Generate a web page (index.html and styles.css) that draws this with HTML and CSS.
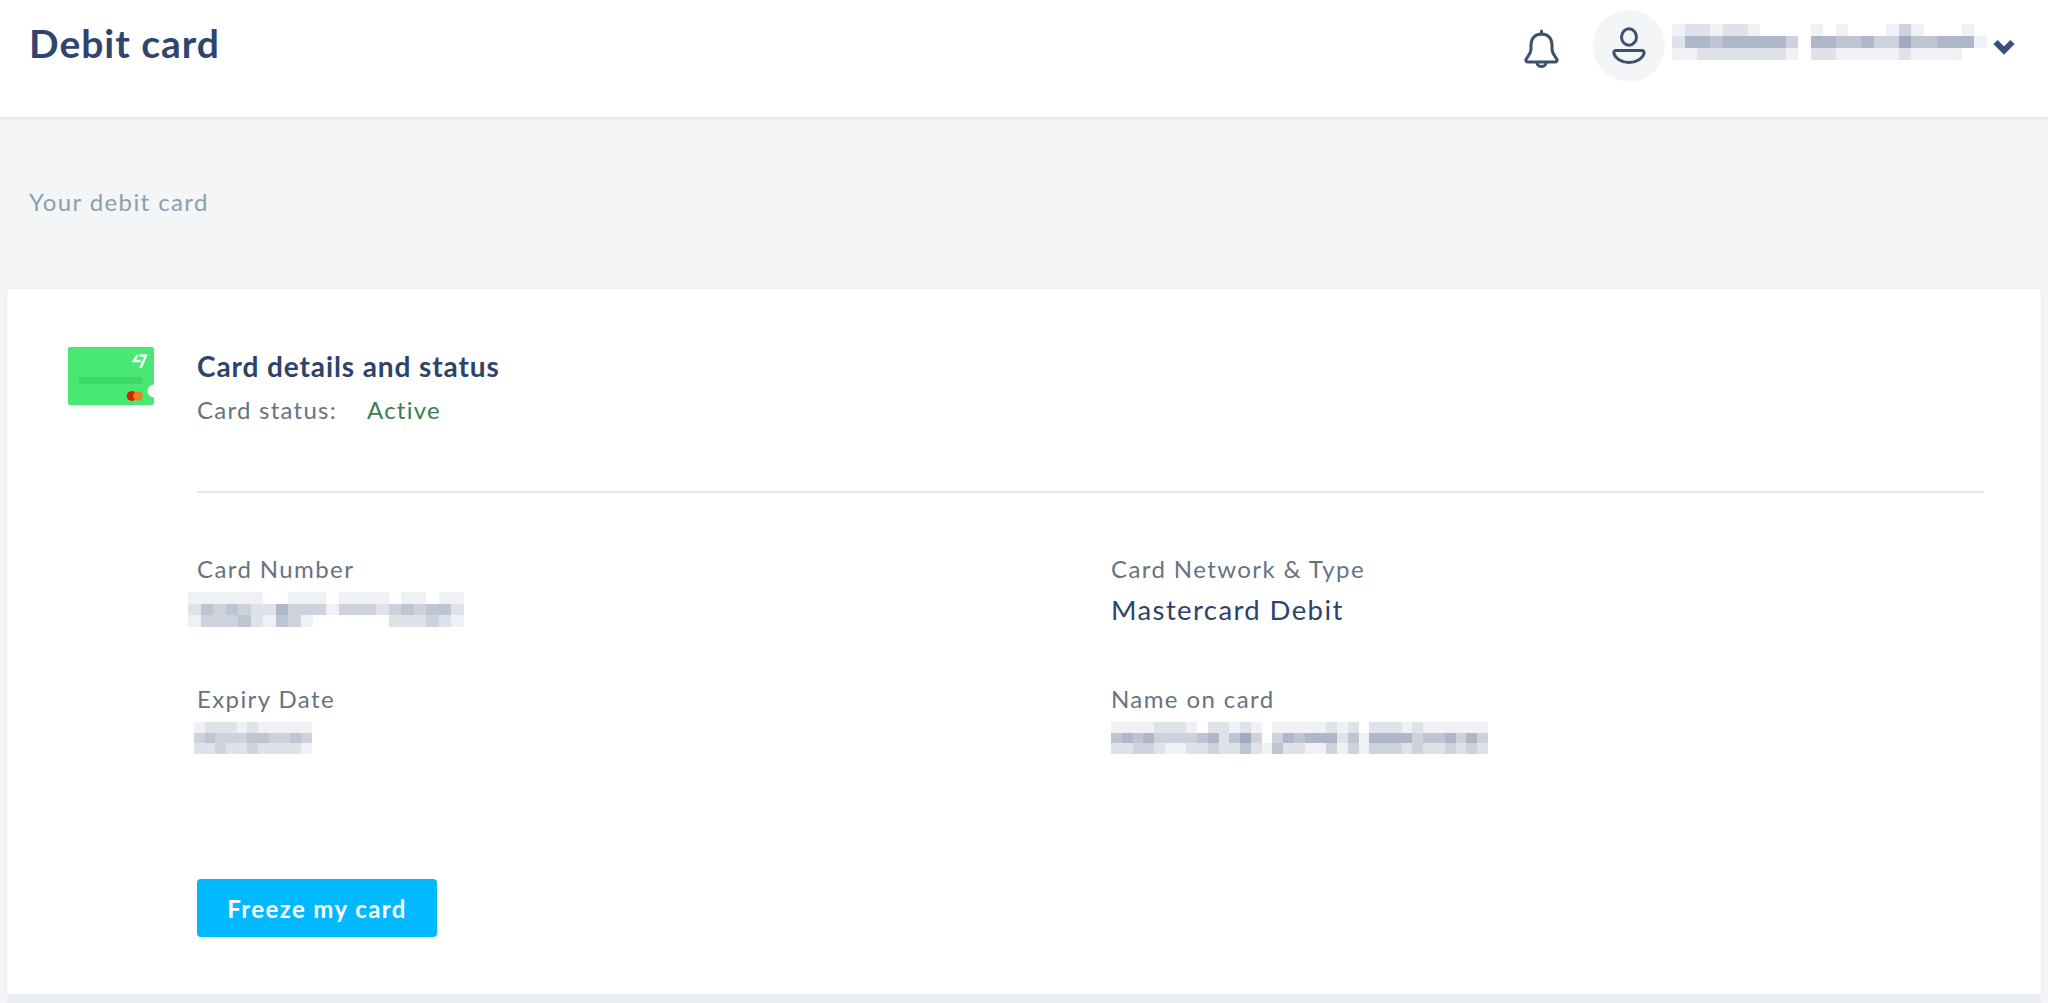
FILE: index.html
```html
<!DOCTYPE html>
<html lang="en">
<head>
<meta charset="utf-8">
<title>Debit card</title>
<link rel="stylesheet" href="styles.css">
</head>
<body>
<header class="topbar">
  <h1 class="page-title">Debit card</h1>
  <div class="account">
    <svg class="bell" viewBox="0 0 37 39" aria-hidden="true"><path d="M18.5 5C11.5 5 8 10 8 16v4c0 5-4 8-5 10.500C2.500 32 3.500 33 5 33h27c1.500 0 2.500-1 2-2.500C33 28 29 25 29 20v-4C29 10 25.500 5 18.500 5z"/><path d="M18.500 2v3M14 33.500a4.500 4 0 0 0 9 0"/></svg>
    <div class="avatar"><svg class="person" viewBox="0 0 34 37" aria-hidden="true"><ellipse cx="17" cy="10" rx="7.500" ry="8.300"/><path d="M4 23.500h26c1.500 0 2.500 1.200 2 3C31 31 24.500 35.500 17 35.500S3 31 2 26.500c-.5-1.800.5-3 2-3z"/></svg></div>
    <div class="mosaic mosaic-user">
      <i class="m1"></i><i class="m2"></i><i class="m2"></i><i class="m1"></i><i class="m2"></i><i class="m2"></i><i class="m1"></i><i></i><i></i><i></i><i></i><i class="m1"></i><i></i><i class="m1"></i><i></i><i></i><i></i><i class="m1"></i><i class="m3"></i><i class="m1"></i><i></i><i></i><i></i><i class="m1"></i><i></i>
      <i class="m2"></i><i class="m5"></i><i class="m5"></i><i class="m4"></i><i class="m5"></i><i class="m5"></i><i class="m5"></i><i class="m5"></i><i class="m5"></i><i class="m3"></i><i></i><i class="m5"></i><i class="m5"></i><i class="m4"></i><i class="m4"></i><i class="m5"></i><i class="m3"></i><i class="m3"></i><i class="m6"></i><i class="m4"></i><i class="m4"></i><i class="m5"></i><i class="m5"></i><i class="m5"></i><i class="m1"></i>
      <i class="m1"></i><i class="m1"></i><i class="m2"></i><i class="m2"></i><i class="m2"></i><i class="m2"></i><i class="m2"></i><i class="m2"></i><i class="m2"></i><i class="m1"></i><i></i><i class="m2"></i><i class="m2"></i><i class="m1"></i><i class="m1"></i><i class="m1"></i><i class="m1"></i><i class="m1"></i><i class="m2"></i><i class="m1"></i><i class="m1"></i><i class="m1"></i><i class="m1"></i><i></i><i></i>
    </div>
    <svg class="chevron" viewBox="0 0 22 16" aria-hidden="true"><path d="M2.500 3l8.500 8.500L19.500 3"/></svg>
  </div>
</header>

<main class="content">
  <h2 class="section-label">Your debit card</h2>
  <section class="card">
    <svg class="card-logo" viewBox="0 0 86 58" aria-hidden="true">
      <path class="logo-base" d="M2 0h82a2 2 0 0 1 2 2v35.500a6.500 6.500 0 0 0 0 13V56a2 2 0 0 1-2 2H2a2 2 0 0 1-2-2V2a2 2 0 0 1 2-2z"/>
      <rect class="logo-strip" x="11" y="30" width="63" height="7"/>
      <circle class="logo-red" cx="63.700" cy="49" r="5"/>
      <circle class="logo-orange" cx="70" cy="49" r="4.800"/>
      <path class="logo-mark" d="M71.500 8.500H78L72.500 21M69.500 8 66 14h6.500"/>
    </svg>
    <div class="card-body">
      <div class="status-block">
        <h3 class="card-title">Card details and status</h3>
        <p class="status-line"><span>Card status:</span><span class="status-active">Active</span></p>
      </div>
      <div class="details">
        <div class="field">
          <div class="field-label">Card Number</div>
          <div class="mosaic mosaic-number">
            <i class="m1"></i><i class="m1"></i><i class="m1"></i><i class="m1"></i><i class="m1"></i><i class="m1"></i><i></i><i></i><i class="m1"></i><i class="m1"></i><i class="m1"></i><i></i><i class="m1"></i><i class="m1"></i><i class="m1"></i><i class="m1"></i><i></i><i class="m1"></i><i class="m1"></i><i></i><i class="m1"></i><i class="m1"></i>
            <i class="m2"></i><i class="m4"></i><i class="m3"></i><i class="m4"></i><i class="m3"></i><i class="m2"></i><i class="m2"></i><i class="m5"></i><i class="m3"></i><i class="m3"></i><i class="m3"></i><i class="m1"></i><i class="m3"></i><i class="m3"></i><i class="m3"></i><i class="m2"></i><i class="m3"></i><i class="m4"></i><i class="m3"></i><i class="m4"></i><i class="m4"></i><i class="m2"></i>
            <i class="m1"></i><i class="m3"></i><i class="m3"></i><i class="m3"></i><i class="m4"></i><i class="m2"></i><i class="m1"></i><i class="m4"></i><i class="m3"></i><i class="m1"></i><i></i><i></i><i></i><i></i><i></i><i></i><i class="m2"></i><i class="m2"></i><i class="m2"></i><i class="m3"></i><i class="m2"></i><i class="m1"></i>
          </div>
        </div>
        <div class="field">
          <div class="field-label">Card Network &amp; Type</div>
          <div class="field-value">Mastercard Debit</div>
        </div>
        <div class="field">
          <div class="field-label">Expiry Date</div>
          <div class="mosaic mosaic-expiry">
            <i class="m1"></i><i class="m2"></i><i class="m2"></i><i class="m2"></i><i class="m1"></i><i class="m2"></i><i class="m1"></i><i class="m1"></i><i class="m1"></i><i class="m1"></i><i class="m1"></i>
            <i class="m3"></i><i class="m4"></i><i class="m3"></i><i class="m3"></i><i class="m3"></i><i class="m4"></i><i class="m4"></i><i class="m3"></i><i class="m3"></i><i class="m4"></i><i class="m3"></i>
            <i class="m2"></i><i class="m2"></i><i class="m3"></i><i class="m2"></i><i class="m2"></i><i class="m3"></i><i class="m2"></i><i class="m2"></i><i class="m2"></i><i class="m2"></i><i class="m1"></i>
          </div>
        </div>
        <div class="field">
          <div class="field-label">Name on card</div>
          <div class="mosaic mosaic-name">
            <i class="m1"></i><i class="m1"></i><i class="m1"></i><i class="m1"></i><i class="m2"></i><i class="m2"></i><i class="m2"></i><i class="m1"></i><i></i><i class="m2"></i><i class="m2"></i><i class="m1"></i><i class="m2"></i><i class="m1"></i><i></i><i class="m1"></i><i class="m1"></i><i class="m1"></i><i class="m1"></i><i class="m1"></i><i class="m2"></i><i class="m1"></i><i class="m2"></i><i></i><i class="m2"></i><i class="m2"></i><i class="m2"></i><i class="m1"></i><i class="m2"></i><i class="m1"></i><i class="m1"></i><i class="m1"></i><i class="m1"></i><i class="m1"></i><i class="m1"></i>
            <i class="m4"></i><i class="m5"></i><i class="m4"></i><i class="m5"></i><i class="m3"></i><i class="m3"></i><i class="m3"></i><i class="m3"></i><i class="m4"></i><i class="m5"></i><i class="m2"></i><i class="m4"></i><i class="m6"></i><i class="m3"></i><i></i><i class="m3"></i><i class="m5"></i><i class="m4"></i><i class="m5"></i><i class="m5"></i><i class="m5"></i><i class="m2"></i><i class="m4"></i><i class="m1"></i><i class="m5"></i><i class="m5"></i><i class="m5"></i><i class="m5"></i><i class="m3"></i><i class="m4"></i><i class="m4"></i><i class="m5"></i><i class="m3"></i><i class="m5"></i><i class="m3"></i>
            <i class="m2"></i><i class="m2"></i><i class="m3"></i><i class="m3"></i><i class="m2"></i><i class="m1"></i><i class="m1"></i><i class="m2"></i><i class="m2"></i><i class="m3"></i><i class="m2"></i><i class="m2"></i><i class="m4"></i><i class="m2"></i><i class="m1"></i><i class="m4"></i><i class="m2"></i><i class="m2"></i><i class="m1"></i><i class="m1"></i><i class="m3"></i><i class="m1"></i><i class="m3"></i><i class="m1"></i><i class="m3"></i><i class="m3"></i><i class="m3"></i><i class="m2"></i><i class="m3"></i><i class="m2"></i><i class="m2"></i><i class="m3"></i><i class="m2"></i><i class="m3"></i><i class="m2"></i>
          </div>
        </div>
      </div>
      <button class="freeze-button" type="button">Freeze my card</button>
    </div>
  </section>
</main>
</body>
</html>
```
FILE: styles.css
```css
* { box-sizing: border-box; }

html, body {
  margin: 0;
  height: 1003px;
  overflow: hidden;
}

body {
  background: #f3f5f7;
  color: #2e4369;
  font-family: "Lato", "Open Sans", sans-serif;
}

.topbar {
  display: flex;
  align-items: center;
  justify-content: space-between;
  height: 118px;
  padding: 0 33px 0 29px;
  background: #fff;
  border-bottom: 1px solid #e3e6ea;
  box-shadow: 0 1px 2px rgba(40, 60, 90, .06);
}

.page-title {
  margin: 0 0 30px;
  font-size: 39px;
  font-weight: 700;
  line-height: 1.2;
  letter-spacing: 1px;
  color: #2f4570;
}

.account {
  display: flex;
  align-items: flex-start;
  height: 118px;
  padding-top: 10px;
}

.bell {
  width: 37px;
  height: 39px;
  margin-top: 19px;
  fill: none;
  stroke: #3c5070;
  stroke-width: 3;
  stroke-linecap: round;
  stroke-linejoin: round;
}

.avatar {
  display: flex;
  align-items: center;
  justify-content: center;
  width: 72px;
  height: 72px;
  margin-left: 33px;
  border-radius: 50%;
  background: #f3f5f7;
}

.person {
  width: 34px;
  height: 37px;
  fill: none;
  stroke: #3c5070;
  stroke-width: 3;
}

.mosaic {
  display: grid;
  filter: blur(.7px);
}

.mosaic i { display: block; }

.mosaic-user {
  grid-template-columns: repeat(25, 12.6px);
  grid-auto-rows: 12px;
  margin: 14px 0 0 7px;
}

.mosaic-number {
  grid-template-columns: repeat(22, 12.55px);
  grid-auto-rows: 11.700px;
  margin: 7px 0 0 -9px;
}

.mosaic-expiry {
  grid-template-columns: repeat(11, 10.700px);
  grid-auto-rows: 10.700px;
  margin: 7px 0 0 -3px;
}

.mosaic-name {
  grid-template-columns: repeat(35, 10.770px);
  grid-auto-rows: 10.700px;
  margin: 7px 0 0 0;
}

.m1 { background: #eff1f4; }
.m2 { background: #dfe2e9; }
.m3 { background: #cdd2dd; }
.m4 { background: #bec5d2; }
.m5 { background: #adb7c9; }
.m6 { background: #9dabc2; }

.chevron {
  width: 22px;
  height: 16px;
  margin: 29px 0 0 6px;
  fill: none;
  stroke: #36517f;
  stroke-width: 6;
}

.section-label {
  margin: 0;
  padding: 68px 29px 0;
  height: 171px;
  font-size: 24px;
  font-weight: 400;
  line-height: 32px;
  letter-spacing: 1.4px;
  color: #8a9fb0;
}

.card {
  display: flex;
  height: 705px;
  margin: 0 7px;
  padding: 58px 0 0 61px;
  background: #fff;
  box-shadow: 0 0 0 1px #ebeef3, 0 9px 0 #ebeef3;
}

.card-logo {
  flex: none;
  width: 86px;
  height: 58px;
}

.logo-base { fill: #47e873; }
.logo-strip { fill: #3fd768; }
.logo-red { fill: #d8200f; }
.logo-orange { fill: #f0801f; }
.logo-mark {
  fill: none;
  stroke: #fff;
  stroke-width: 2.400;
}

.card-body {
  flex: 1;
  margin-left: 43px;
  margin-right: 57px;
}

.status-block {
  height: 146px;
  border-bottom: 2px solid #e6e8ec;
}

.card-title {
  margin: 0;
  font-size: 28px;
  font-weight: 700;
  line-height: 38px;
  letter-spacing: .9px;
  color: #2e4369;
}

.status-line {
  display: flex;
  gap: 30px;
  margin: 9px 0 0;
  font-size: 24px;
  line-height: 32px;
  letter-spacing: 1.250px;
  color: #66747f;
}

.status-active { color: #3a7d50; }

.details {
  display: grid;
  grid-template-columns: 914px 1fr;
  grid-auto-rows: 130px;
  padding-top: 60px;
}

.field-label {
  font-size: 24px;
  line-height: 32px;
  letter-spacing: 1.400px;
  color: #66747f;
}

.field-value {
  margin-top: 6px;
  font-size: 27.500px;
  line-height: 38px;
  letter-spacing: 1.400px;
  color: #2e4369;
}

.freeze-button {
  display: block;
  width: 240px;
  height: 58px;
  margin-top: 66px;
  padding: 0;
  border: 0;
  border-radius: 4px;
  background: #00b9ff;
  color: #fff;
  font-family: inherit;
  font-size: 24px;
  font-weight: 700;
  letter-spacing: 1.400px;
}
```
